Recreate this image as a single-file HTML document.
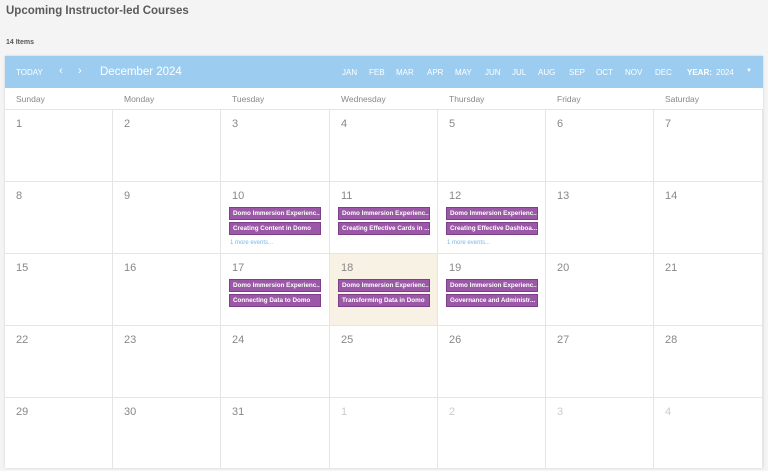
<!DOCTYPE html><html><head><style>
*{box-sizing:border-box;margin:0;padding:0}
body{width:768px;height:471px;background:#f4f4f4;font-family:"Liberation Sans",sans-serif;position:relative;overflow:hidden}
.t{position:absolute;left:6px;top:5px;font-size:11.5px;font-weight:bold;color:#5a5a5a}
.n{position:absolute;left:6px;top:39px;font-size:7px;font-weight:bold;color:#555}
.cal{position:absolute;left:5px;top:56px;width:758px;height:412px;background:#fff;box-shadow:0 0 2px #ccc}
.hd{position:absolute;left:0;top:0;width:758px;height:32px;background:#9ccdf0;color:#fff}
.hd span{position:absolute;top:12px;font-size:8px}
.dh{position:absolute;top:38px;font-size:8.5px;color:#888}
.c{position:absolute;border-right:1px solid #e5e5e5;border-top:1px solid #e5e5e5}
.d{position:absolute;left:11px;top:8px;font-size:11px;color:#888}
.o .d{color:#ccc}
.e{position:absolute;left:8px;width:92px;height:13px;background:#9b58a6;border:1px solid #7d3f8a;color:#fff;font-size:6.3px;font-weight:bold;line-height:11px;padding-left:3px;white-space:nowrap;overflow:hidden}
.m{position:absolute;left:9px;top:58px;font-size:6px;color:#7ab8e8}
</style></head><body>
<div class="t">Upcoming Instructor-led Courses</div>
<div class="n">14 Items</div>
<div class="cal">
<div class="hd">
<span style="left:11px">TODAY</span>
<span style="left:54px;top:9px;font-size:11px">&#8249;</span>
<span style="left:73px;top:9px;font-size:11px">&#8250;</span>
<span style="left:95px;top:10px;font-size:11.5px">December 2024</span>
<span style="left:337px">JAN</span><span style="left:364px">FEB</span><span style="left:391px">MAR</span><span style="left:422px">APR</span><span style="left:450px">MAY</span><span style="left:480px">JUN</span><span style="left:507px">JUL</span><span style="left:533px">AUG</span><span style="left:564px">SEP</span><span style="left:591px">OCT</span><span style="left:620px">NOV</span><span style="left:650px">DEC</span>
<span style="left:682px;font-weight:bold">YEAR:</span><span style="left:711px">2024</span><span style="left:741px;font-size:6px;top:12px">&#9660;</span>
</div>
<div class="dh" style="left:11px">Sunday</div><div class="dh" style="left:119px">Monday</div><div class="dh" style="left:227px">Tuesday</div><div class="dh" style="left:336px">Wednesday</div><div class="dh" style="left:444px">Thursday</div><div class="dh" style="left:552px">Friday</div><div class="dh" style="left:660px">Saturday</div>
<div id="g"></div>
</div>
<script>
var xs=[0,108,216,325,433,541,649,758],ys=[53,125,197,269,341,412];
var nums=[1,2,3,4,5,6,7,8,9,10,11,12,13,14,15,16,17,18,19,20,21,22,23,24,25,26,27,28,29,30,31,1,2,3,4];
var ev={9:["Domo Immersion Experienc...","Creating Content in Domo",1],10:["Domo Immersion Experienc...","Creating Effective Cards in ..."],11:["Domo Immersion Experienc...","Creating Effective Dashboa...",1],16:["Domo Immersion Experienc...","Connecting Data to Domo"],17:["Domo Immersion Experienc...","Transforming Data in Domo"],18:["Domo Immersion Experienc...","Governance and Administr..."]};
var h="";
for(var i=0;i<35;i++){var r=Math.floor(i/7),c=i%7;
var bg=i==17?"background:#f8f2e4;":"";
h+='<div class="c'+(i>30?' o':'')+'" style="'+bg+'left:'+xs[c]+'px;top:'+ys[r]+'px;width:'+(xs[c+1]-xs[c])+'px;height:'+(ys[r+1]-ys[r])+'px"><div class="d">'+nums[i]+'</div>';
if(ev[i]){h+='<div class="e" style="top:25px">'+ev[i][0]+'</div><div class="e" style="top:40px">'+ev[i][1]+'</div>';if(ev[i][2])h+='<div class="m">1 more events...</div>';}
h+='</div>';}
document.getElementById("g").innerHTML=h;
</script>
</body></html>
